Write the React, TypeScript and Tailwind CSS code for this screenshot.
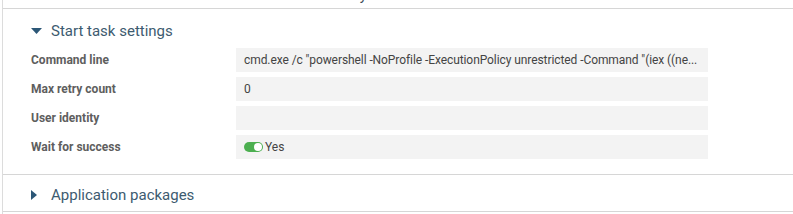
import React from "react";

const rows: { label: string; value: React.ReactNode }[] = [
  {
    label: "Command line",
    value: (
      <span className="whitespace-nowrap tracking-[-0.08px]">
        cmd.exe /c "powershell -NoProfile -ExecutionPolicy unrestricted -Command "(iex ((ne...
      </span>
    ),
  },
  { label: "Max retry count", value: <span>0</span> },
  { label: "User identity", value: <span></span> },
  {
    label: "Wait for success",
    value: (
      <span className="flex items-center">
        <span className="relative w-[19px] h-[10px] rounded-full bg-[#4caf50] flex items-center justify-end pr-[1px]">
          <span className="w-[8px] h-[8px] rounded-full bg-white" />
        </span>
        <span className="ml-[2px]">Yes</span>
      </span>
    ),
  },
];

function DownTri() {
  return (
    <svg width="11" height="6" viewBox="0 0 11 6" className="block">
      <polygon points="0,0 11,0 5.5,6" fill="#2c5777" />
    </svg>
  );
}

function RightTri() {
  return (
    <svg width="6" height="10" viewBox="0 0 6 10" className="block">
      <polygon points="0,0 6,5 0,10" fill="#2c5777" />
    </svg>
  );
}

export default function App() {
  return (
    <div className="w-[793px] h-[214px] bg-white overflow-hidden font-['Roboto',sans-serif]">
      <div className="ml-[2px] w-[791px] h-full border-l border-[#dcdcdc] flex flex-col">
        <div className="h-[8px] overflow-hidden relative">
          <span className="absolute left-[300px] top-[-14px] text-[15px] leading-[18px] text-[#3b4a57] whitespace-nowrap">
            Summary
          </span>
        </div>
        <div className="border-t border-[#d6d6d6]">
          <div className="pt-[13px] h-[31px] flex items-center pl-[28px]">
            <div className="w-[20px] flex items-center">
              <DownTri />
            </div>
            <span className="text-[15px] leading-[18px] text-[#3d5b70]">Start task settings</span>
          </div>
          <div className="mt-[8px] pl-[28px] flex flex-col gap-[5px] pb-[15px]">
            {rows.map((r) => (
              <div key={r.label} className="flex h-[24px]">
                <div className="w-[205px] flex items-center text-[12px] font-bold text-[#5e5e5e]">
                  {r.label}
                </div>
                <div className="w-[472px] bg-[#f3f3f3] flex items-center pl-[8px] text-[12px] text-[#444] overflow-hidden">
                  {r.value}
                </div>
              </div>
            ))}
          </div>
        </div>
        <div className="border-t border-b border-[#d6d6d6] pt-[11px] pb-[7px]">
          <div className="h-[18px] flex items-center pl-[28px]">
            <div className="w-[20px] flex items-center">
              <RightTri />
            </div>
            <span className="text-[15px] leading-[18px] text-[#3d5b70]">Application packages</span>
          </div>
        </div>
      </div>
    </div>
  );
}
